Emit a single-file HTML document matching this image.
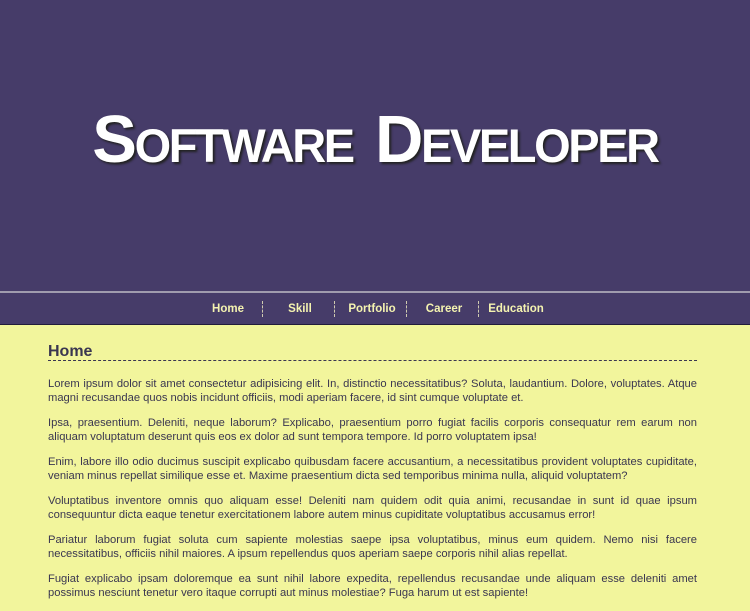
<!DOCTYPE html>
<html><head><style>
html,body{margin:0;padding:0}
body{width:750px;height:595px;overflow:hidden;background:#f2f59c;font-family:"Liberation Sans",sans-serif}
.hd{height:291px;background:#463c69;position:relative}
.hd h1{margin:0;position:absolute;top:100px;left:0;width:750px;text-align:center;font-size:67px;font-weight:bold;font-variant:small-caps;color:#fff;letter-spacing:-2.4px;word-spacing:6px;text-shadow:2px 2px 2px #222;line-height:80px}
.ln{height:2px;background:#a09cae}
.nav{height:31px;background:#463c69;border-bottom:1px solid #221c3a;position:relative}
.nav a{position:absolute;top:10px;color:#f4f3b0;font-size:11.5px;font-weight:bold;width:72px;text-align:center;text-decoration:none}
.sep{position:absolute;top:8px;height:16px;border-left:1px dashed #cfcbb0}
.c{position:absolute;left:48px;top:343px;width:649px;color:#3a3650;font-size:11.2px}
h2{margin:0;font-size:16px;color:#3a3650;border-bottom:1px dashed #3a3650;line-height:18px;height:17px}
p{margin:10px 0 11px;line-height:14px;text-align:justify}
p:first-of-type{margin-top:16px}
</style></head><body>
<div class="hd"><h1>Software Developer</h1></div>
<div class="ln"></div>
<div class="nav">
<a style="left:192px">Home</a><span class="sep" style="left:262px"></span>
<a style="left:264px">Skill</a><span class="sep" style="left:334px"></span>
<a style="left:336px">Portfolio</a><span class="sep" style="left:406px"></span>
<a style="left:408px">Career</a><span class="sep" style="left:478px"></span>
<a style="left:480px">Education</a>
</div>
<div class="c">
<h2>Home</h2>
<p>Lorem ipsum dolor sit amet consectetur adipisicing elit. In, distinctio necessitatibus? Soluta, laudantium. Dolore, voluptates. Atque magni recusandae quos nobis incidunt officiis, modi aperiam facere, id sint cumque voluptate et.</p>
<p>Ipsa, praesentium. Deleniti, neque laborum? Explicabo, praesentium porro fugiat facilis corporis consequatur rem earum non aliquam voluptatum deserunt quis eos ex dolor ad sunt tempora tempore. Id porro voluptatem ipsa!</p>
<p>Enim, labore illo odio ducimus suscipit explicabo quibusdam facere accusantium, a necessitatibus provident voluptates cupiditate, veniam minus repellat similique esse et. Maxime praesentium dicta sed temporibus minima nulla, aliquid voluptatem?</p>
<p>Voluptatibus inventore omnis quo aliquam esse! Deleniti nam quidem odit quia animi, recusandae in sunt id quae ipsum consequuntur dicta eaque tenetur exercitationem labore autem minus cupiditate voluptatibus accusamus error!</p>
<p>Pariatur laborum fugiat soluta cum sapiente molestias saepe ipsa voluptatibus, minus eum quidem. Nemo nisi facere necessitatibus, officiis nihil maiores. A ipsum repellendus quos aperiam saepe corporis nihil alias repellat.</p>
<p>Fugiat explicabo ipsam doloremque ea sunt nihil labore expedita, repellendus recusandae unde aliquam esse deleniti amet possimus nesciunt tenetur vero itaque corrupti aut minus molestiae? Fuga harum ut est sapiente!</p>
</div>
</body></html>
